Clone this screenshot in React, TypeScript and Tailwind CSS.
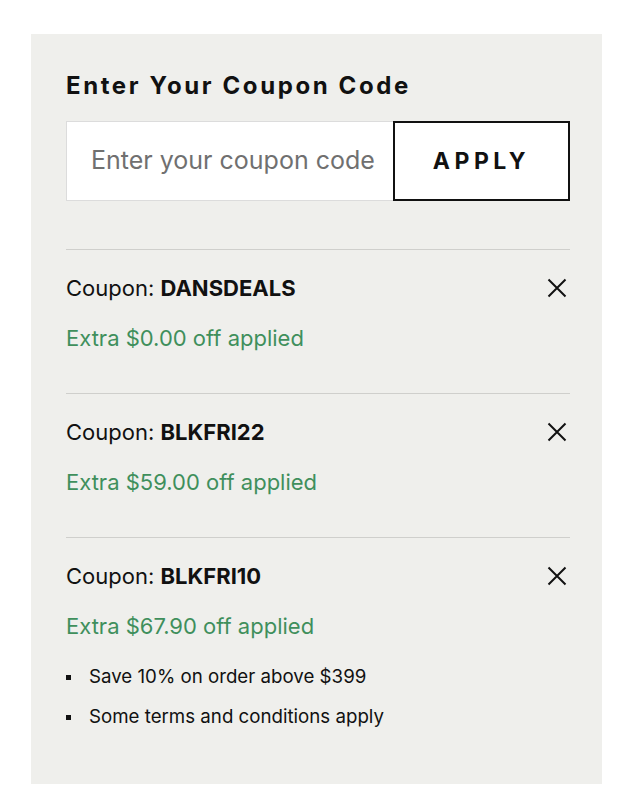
import React from "react";

const coupons = [
  { code: "DANSDEALS", amount: "$0.00", bullets: [] as string[] },
  { code: "BLKFRI22", amount: "$59.00", bullets: [] as string[] },
  {
    code: "BLKFRI10",
    amount: "$67.90",
    bullets: ["Save 10% on order above $399", "Some terms and conditions apply"],
  },
];

function XIcon() {
  return (
    <svg width="20" height="20" viewBox="0 0 20 20" fill="none" stroke="#111" strokeWidth="2" strokeLinecap="butt">
      <path d="M1.5 1.5 L18.5 18.5 M18.5 1.5 L1.5 18.5" />
    </svg>
  );
}

export default function App() {
  return (
    <div className="min-h-[800px] bg-white pt-[34px] px-[31px] font-['Inter','Liberation_Sans',sans-serif]">
      <div className="w-[571px] h-[750px] bg-[#efefec] pl-[35px] pr-[32px] pt-[37px]">
        <h2 className="text-[24px] leading-[30px] font-bold tracking-[2.6px] text-[#111]">
          Enter Your Coupon Code
        </h2>
        <div className="flex mt-[20px] h-[80px]">
          <div className="flex-1 bg-white border border-[#dcdcdc] border-r-0 flex items-center pl-[24px]">
            <span className="text-[25px] text-[#707070]">Enter your coupon code</span>
          </div>
          <button className="w-[177px] border-2 border-[#111] bg-white flex items-center justify-center text-[23px] font-bold tracking-[4.5px] text-[#111]">
            APPLY
          </button>
        </div>
        <div className="mt-[48px]">
          {coupons.map((c) => (
            <div key={c.code} className="border-t border-[#cfcfcc] pt-[25px] pb-[41px]">
              <div className="flex items-center justify-between h-[26px]">
                <div className="text-[22px] text-[#111]">
                  Coupon: <span className="font-bold">{c.code}</span>
                </div>
                <div className="mr-[3px]">
                  <XIcon />
                </div>
              </div>
              <div className="mt-[23px] text-[22px] leading-[28px] text-[#3f8f5c]">
                Extra {c.amount} off applied
              </div>
              {c.bullets.length > 0 && (
                <ul className="mt-[25px] flex flex-col gap-[16px]">
                  {c.bullets.map((b) => (
                    <li key={b} className="flex items-center text-[18.7px] leading-[24px] text-[#111]">
                      <span className="w-[5px] h-[5px] bg-[#111] mr-[18px]" />
                      {b}
                    </li>
                  ))}
                </ul>
              )}
            </div>
          ))}
        </div>
      </div>
    </div>
  );
}
